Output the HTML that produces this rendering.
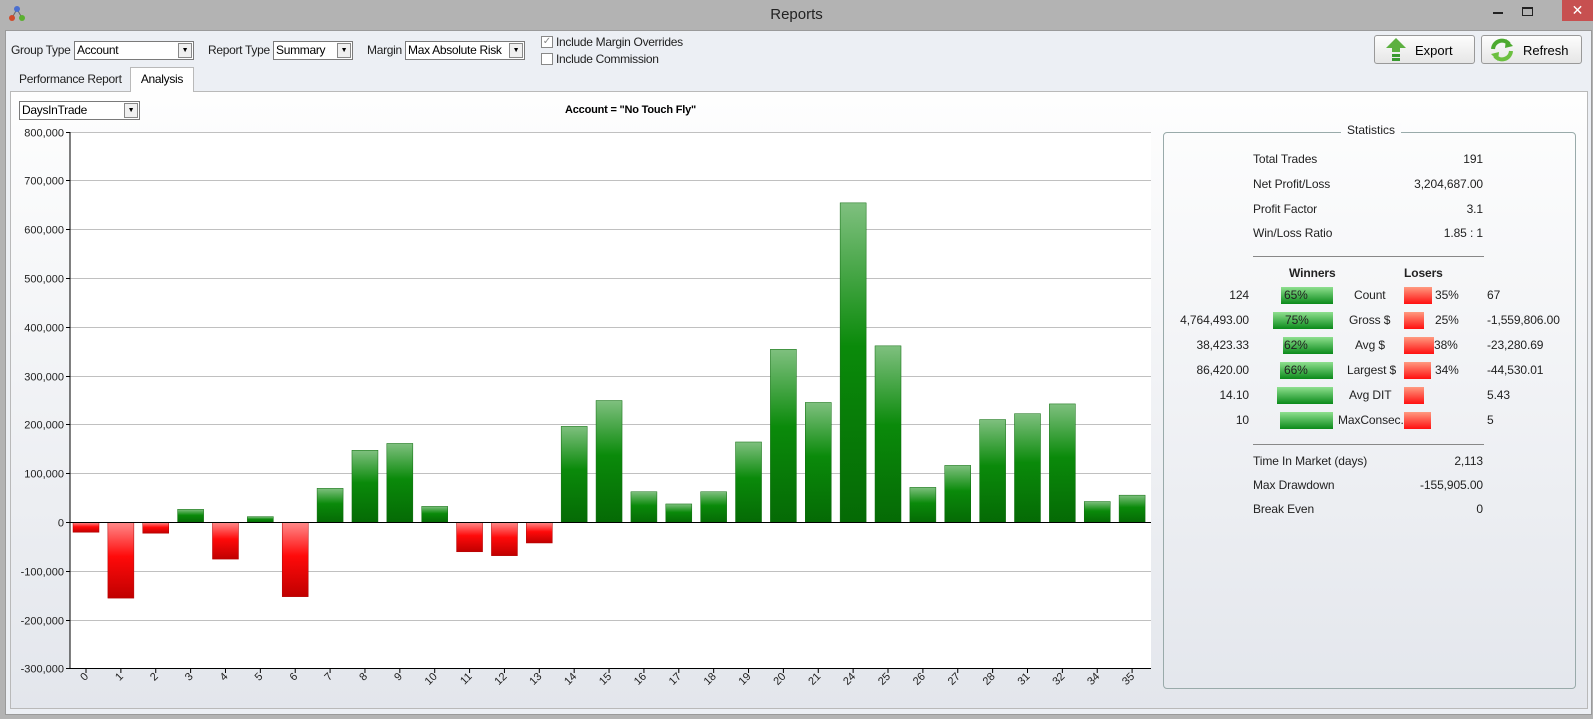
<!DOCTYPE html>
<html><head><meta charset="utf-8"><style>
*{margin:0;padding:0;box-sizing:border-box}
body{width:1593px;height:719px;background:#b3b3b3;font-family:"Liberation Sans",sans-serif;font-size:12px;color:#000;position:relative;overflow:hidden}
.abs{position:absolute}
.title{left:0;top:0;width:1593px;height:30px;text-align:center;font-size:15px;line-height:30px;color:#222}
.client{left:5px;top:30px;width:1587px;height:685px;background:#eceff4;border:1px solid #9a9a9a}
.combo{height:19px;border:1px solid #7a7a7a;background:#fff;font-size:12px;line-height:17px;padding-left:2px;letter-spacing:-0.3px}
.combo i{position:absolute;right:1px;top:1px;width:14px;height:15px;border:1px solid #888;background:#f0f0f0;font-style:normal;font-size:7px;text-align:center;line-height:13px}
.lbl{font-size:12px;letter-spacing:-0.3px;color:#222}
.cb{width:12px;height:12px;border:1px solid #888;background:#fff}
.btn{height:29px;border:1px solid #999;border-radius:3px;background:linear-gradient(#fdfdfd,#e6e6e6);font-size:13px}
.panel{left:10px;top:91px;width:1578px;height:618px;border:1px solid #b9b9b9;background:linear-gradient(#fefefe,#e3e6ec)}
.stats{left:1163px;top:132px;width:413px;height:557px;border:1px solid #9aa;border-radius:4px}
.s{position:absolute;font-size:12px;color:#222;letter-spacing:-0.1px;line-height:17px}
.g{position:absolute;height:17px;background:linear-gradient(#8fe08f,#0a8a1a);}
.rd{position:absolute;height:17px;background:linear-gradient(#ff9a80,#ff1010)}
.rt{width:120px;text-align:right;left:1129px}
.rv{width:120px;text-align:right;left:1363px}
</style></head><body>
<div class="abs title">Reports</div>
<svg class="abs" style="left:8px;top:5px" width="18" height="18"><line x1="9" y1="4" x2="4" y2="13" stroke="#666"/><line x1="9" y1="4" x2="14" y2="13" stroke="#666"/><circle cx="9" cy="4" r="3" fill="#4a6fd0"/><circle cx="4" cy="13" r="3" fill="#d04a2a"/><circle cx="14" cy="13" r="3" fill="#5ab030"/></svg>
<div class="abs" style="left:1493px;top:12px;width:10px;height:2px;background:#222"></div>
<div class="abs" style="left:1522px;top:7px;width:11px;height:9px;border:1px solid #222;border-top-width:2px"></div>
<div class="abs" style="left:1562px;top:0;width:31px;height:21px;background:#c75050;color:#fff;text-align:center;font-size:14px;line-height:21px">✕</div>
<div class="abs client"></div>
<div class="abs lbl" style="left:11px;top:43px">Group Type</div>
<div class="abs combo" style="left:74px;top:41px;width:120px">Account<i>▼</i></div>
<div class="abs lbl" style="left:208px;top:43px">Report Type</div>
<div class="abs combo" style="left:273px;top:41px;width:80px">Summary<i>▼</i></div>
<div class="abs lbl" style="left:367px;top:43px">Margin</div>
<div class="abs combo" style="left:405px;top:41px;width:120px">Max Absolute Risk<i>▼</i></div>
<div class="abs cb" style="left:541px;top:36px;font-size:10px;line-height:10px;color:#888;text-align:center">✓</div>
<div class="abs lbl" style="left:556px;top:35px">Include Margin Overrides</div>
<div class="abs cb" style="left:541px;top:53px"></div>
<div class="abs lbl" style="left:556px;top:52px">Include Commission</div>
<div class="abs btn" style="left:1374px;top:35px;width:101px"></div>
<svg class="abs" style="left:1385px;top:37px" width="22" height="26"><polygon points="11,1 21,11 15,11 15,15 7,15 7,11 1,11" fill="#5cb040"/><rect x="7" y="17" width="8" height="3" fill="#3a9a30"/><rect x="7" y="21" width="8" height="3" fill="#3a9a30"/></svg>
<div class="abs" style="left:1415px;top:43px;font-size:13px">Export</div>
<div class="abs btn" style="left:1481px;top:35px;width:101px"></div>
<svg class="abs" style="left:1489px;top:37px" width="26" height="26"><path d="M4 12 A9 9 0 0 1 20 7" stroke="#4caa30" stroke-width="4" fill="none"/><polygon points="17,2 24,9 16,11" fill="#4caa30"/><path d="M22 14 A9 9 0 0 1 6 19" stroke="#6cc040" stroke-width="4" fill="none"/><polygon points="9,24 2,17 10,15" fill="#6cc040"/></svg>
<div class="abs" style="left:1523px;top:43px;font-size:13px">Refresh</div>
<div class="abs panel"></div>
<div class="abs lbl" style="left:19px;top:72px">Performance Report</div>
<div class="abs" style="left:130px;top:67px;width:64px;height:25px;border:1px solid #b9b9b9;border-bottom:none;background:#fefefe;font-size:12px;text-align:center;line-height:23px;letter-spacing:-0.3px">Analysis</div>
<div class="abs combo" style="left:19px;top:101px;width:121px">DaysInTrade<i>▼</i></div>
<div class="abs" style="left:565px;top:104px;font-size:11px;font-weight:bold;letter-spacing:-0.2px">Account = "No Touch Fly"</div>
<svg class="abs" style="left:0;top:0" width="1160" height="719" font-family="Liberation Sans" font-size="11">
<defs>
<linearGradient id="gg" x1="0" y1="0" x2="0" y2="1"><stop offset="0" stop-color="#7fc07f"/><stop offset="0.45" stop-color="#0a8a0a"/><stop offset="1" stop-color="#056a05"/></linearGradient>
<linearGradient id="rg" x1="0" y1="0" x2="0" y2="1"><stop offset="0" stop-color="#ff8a8a"/><stop offset="0.45" stop-color="#ff0a0a"/><stop offset="1" stop-color="#c00000"/></linearGradient>
</defs>
<rect x="70" y="132" width="1081" height="537" fill="#fff"/>
<g id="grid" stroke="#c0c0c0"></g>
<g id="bars"></g>
<g id="lab" fill="#222"></g>
<line x1="70" y1="132" x2="70" y2="669" stroke="#000"/>
<line x1="70" y1="668.5" x2="1151" y2="668.5" stroke="#000"/>
<line x1="70" y1="522.5" x2="1151" y2="522.5" stroke="#000"/>
</svg>
<div class="abs stats"></div>
<div class="abs" style="left:1341px;top:123px;padding:0 6px;background:#fcfcfd;font-size:12px;color:#222">Statistics</div>
<div class="s" style="left:1253px;top:151px">Total Trades</div><div class="s rv" style="top:151px">191</div>
<div class="s" style="left:1253px;top:176px">Net Profit/Loss</div><div class="s rv" style="top:176px">3,204,687.00</div>
<div class="s" style="left:1253px;top:201px">Profit Factor</div><div class="s rv" style="top:201px">3.1</div>
<div class="s" style="left:1253px;top:225px">Win/Loss Ratio</div><div class="s rv" style="top:225px">1.85 : 1</div>
<div class="abs" style="left:1253px;top:256px;width:231px;height:1px;background:#888"></div>
<div class="s" style="left:1289px;top:265px;font-weight:bold">Winners</div><div class="s" style="left:1404px;top:265px;font-weight:bold">Losers</div>
<div class="g" style="left:1281px;top:287px;width:52px"></div><div class="rd" style="left:1404px;top:287px;width:28px"></div>
<div class="g" style="left:1273px;top:312px;width:60px"></div><div class="rd" style="left:1404px;top:312px;width:20px"></div>
<div class="g" style="left:1283px;top:337px;width:50px"></div><div class="rd" style="left:1404px;top:337px;width:30px"></div>
<div class="g" style="left:1280px;top:362px;width:53px"></div><div class="rd" style="left:1404px;top:362px;width:27px"></div>
<div class="g" style="left:1277px;top:387px;width:56px"></div><div class="rd" style="left:1404px;top:387px;width:20px"></div>
<div class="g" style="left:1280px;top:412px;width:53px"></div><div class="rd" style="left:1404px;top:412px;width:27px"></div>
<div class="s rt" style="top:287px">124</div><div class="s" style="left:1284px;top:287px">65%</div><div class="s" style="left:1354px;top:287px">Count</div><div class="s" style="left:1435px;top:287px">35%</div><div class="s" style="left:1487px;top:287px">67</div>
<div class="s rt" style="top:312px">4,764,493.00</div><div class="s" style="left:1285px;top:312px">75%</div><div class="s" style="left:1349px;top:312px">Gross $</div><div class="s" style="left:1435px;top:312px">25%</div><div class="s" style="left:1487px;top:312px">-1,559,806.00</div>
<div class="s rt" style="top:337px">38,423.33</div><div class="s" style="left:1284px;top:337px">62%</div><div class="s" style="left:1355px;top:337px">Avg $</div><div class="s" style="left:1434px;top:337px">38%</div><div class="s" style="left:1487px;top:337px">-23,280.69</div>
<div class="s rt" style="top:362px">86,420.00</div><div class="s" style="left:1284px;top:362px">66%</div><div class="s" style="left:1347px;top:362px">Largest $</div><div class="s" style="left:1435px;top:362px">34%</div><div class="s" style="left:1487px;top:362px">-44,530.01</div>
<div class="s rt" style="top:387px">14.10</div><div class="s" style="left:1349px;top:387px">Avg DIT</div><div class="s" style="left:1487px;top:387px">5.43</div>
<div class="s rt" style="top:412px">10</div><div class="s" style="left:1338px;top:412px">MaxConsec.</div><div class="s" style="left:1487px;top:412px">5</div>
<div class="abs" style="left:1253px;top:444px;width:231px;height:1px;background:#888"></div>
<div class="s" style="left:1253px;top:453px">Time In Market (days)</div><div class="s rv" style="top:453px">2,113</div>
<div class="s" style="left:1253px;top:477px">Max Drawdown</div><div class="s rv" style="top:477px">-155,905.00</div>
<div class="s" style="left:1253px;top:501px">Break Even</div><div class="s rv" style="top:501px">0</div>
<script>
var ns="http://www.w3.org/2000/svg";
function el(t,a,p,txt){var e=document.createElementNS(ns,t);for(var k in a)e.setAttribute(k,a[k]);if(txt!=null)e.textContent=txt;document.getElementById(p).appendChild(e);}
var y0=522.5,k=0.488;
for(var v=-300;v<=800;v+=100){var y=Math.round(y0-v*k-0.5)+0.5;if(v!=0&&v!=-300)el("line",{x1:70,x2:1151,y1:y,y2:y},"grid");
el("line",{x1:66,x2:70,y1:y,y2:y,stroke:"#000"},"grid");
var s=v==0?"0":(v<0?"-":"")+Math.abs(v)+",000";el("text",{x:64,y:y+4,"text-anchor":"end"},"lab",s);}
var L=[0,1,2,3,4,5,6,7,8,9,10,11,12,13,14,15,16,17,18,19,20,21,24,25,26,27,28,31,32,34,35];
var V=[-20,-155,-22,27,-75,12,-152,70,148,162,33,-60,-68,-42,197,250,63,38,63,165,355,246,655,362,72,117,211,223,243,43,56];
for(var i=0;i<L.length;i++){var cx=86+i*34.87;var h=Math.abs(V[i])*k;
el("rect",{x:cx-13,y:V[i]>0?y0-h:y0,width:26,height:h,fill:V[i]>0?"url(#gg)":"url(#rg)",stroke:V[i]>0?"#0a6a0a":"#b00000","stroke-width":0.5},"bars");
el("line",{x1:cx,x2:cx,y1:669,y2:673,stroke:"#000"},"lab");
el("text",{x:cx+3,y:677,"text-anchor":"end",transform:"rotate(-45 "+(cx+3)+" 677)"},"lab",L[i]);}
</script>
</body></html>
